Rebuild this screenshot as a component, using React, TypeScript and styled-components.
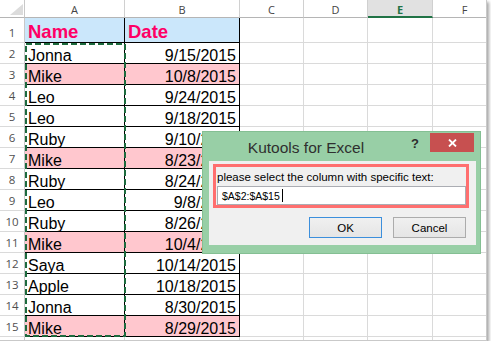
import React from 'react';
import styled, { createGlobalStyle, css } from 'styled-components';

const GlobalStyle = createGlobalStyle`
  html, body {
    margin: 0;
    padding: 0;
    background: #fff;
  }
  body {
    font-family: "Liberation Sans", Arial, sans-serif;
  }
  * {
    box-sizing: border-box;
  }
`;

const rows: Array<{ name: string; date: string; dup?: boolean }> = [
  { name: 'Jonna', date: '9/15/2015' },
  { name: 'Mike', date: '10/8/2015', dup: true },
  { name: 'Leo', date: '9/24/2015' },
  { name: 'Leo', date: '9/18/2015' },
  { name: 'Ruby', date: '9/10/2015' },
  { name: 'Mike', date: '8/23/2015', dup: true },
  { name: 'Ruby', date: '8/24/2015' },
  { name: 'Leo', date: '9/8/2015' },
  { name: 'Ruby', date: '8/26/2015' },
  { name: 'Mike', date: '10/4/2015', dup: true },
  { name: 'Saya', date: '10/14/2015' },
  { name: 'Apple', date: '10/18/2015' },
  { name: 'Jonna', date: '8/30/2015' },
  { name: 'Mike', date: '8/29/2015', dup: true },
];

const columns = ['A', 'B', 'C', 'D', 'E', 'F'];
const emptyCols = 4; // C..F

const Frame = styled.div`
  position: relative;
  width: 487px;
  height: 341px;
  overflow: hidden;
  background: #fff;
  border-right: 1px solid #c9c9c9;
  border-bottom: 1px solid #c9c9c9;
  box-shadow: 2px 2px 3px rgba(0, 0, 0, 0.35);
`;

const Sheet = styled.div`
  display: grid;
  grid-template-columns: 25px 100px 115px 64px 64px 65px 64px;
  grid-template-rows: 18px 25px repeat(15, 21px);
`;

const Corner = styled.div`
  position: relative;
  border-right: 1px solid #c8c8c8;
  border-bottom: 1px solid #b5b5b5;

  &::after {
    content: '';
    position: absolute;
    right: 1px;
    bottom: 2px;
    border-style: solid;
    border-width: 0 0 11px 13px;
    border-color: transparent transparent #dcdcdc transparent;
  }
`;

const ColHead = styled.div<{ $active?: boolean }>`
  display: flex;
  justify-content: center;
  padding-top: 2px;
  font-family: "Open Sans", "Liberation Sans", sans-serif;
  font-size: 11px;
  line-height: 15px;
  color: #444;
  border-right: 1px solid #d0d0d0;
  border-bottom: 1px solid #b5b5b5;

  ${({ $active }) =>
    $active &&
    css`
      background: #e1e1e1;
      color: #217346;
      font-weight: bold;
      border-bottom: 2px solid #217346;
    `}
`;

const RowHead = styled.div`
  display: flex;
  justify-content: center;
  align-items: flex-end;
  padding-bottom: 2px;
  font-family: "Open Sans", "Liberation Sans", sans-serif;
  font-size: 11.5px;
  line-height: 14px;
  color: #4f4f4f;
  border-right: 1px solid #c8c8c8;
  border-bottom: 1px solid #dadada;
`;

const Cell = styled.div<{ $fill?: string; $boxed?: boolean; $right?: boolean }>`
  overflow: hidden;
  white-space: nowrap;
  padding: 2px 3px 0 3px;
  font-size: 16px;
  line-height: 21px;
  color: #000;
  text-align: ${({ $right }) => ($right ? 'right' : 'left')};
  background: ${({ $fill }) => $fill || '#fff'};
  border-right: 1px solid ${({ $boxed }) => ($boxed ? '#000' : '#dadada')};
  border-bottom: 1px solid ${({ $boxed }) => ($boxed ? '#000' : '#dadada')};
`;

const TitleCell = styled(Cell)`
  padding-top: 1px;
  font-size: 18.5px;
  font-weight: bold;
  line-height: 25px;
  color: #ff0066;
`;

const MarchingAnts = styled.svg`
  position: absolute;
  left: 25px;
  top: 43px;
  pointer-events: none;
`;

/* dialog */

const Dialog = styled.div`
  position: absolute;
  left: 202px;
  top: 131px;
  width: 279px;
  height: 123px;
  display: flex;
  flex-direction: column;
  padding: 0 4px 8px 6px;
  background: #98cfa6;
  border: 1px solid #84bf93;
`;

const TitleBar = styled.div`
  height: 29px;
  display: flex;
  align-items: flex-start;
`;

const Title = styled.div`
  flex: 1;
  padding: 7px 8px 0 0;
  text-align: center;
  font-size: 15.5px;
  color: #2f2f2f;
`;

const Help = styled.div`
  margin: 4px 11px 0 0;
  font-size: 13px;
  font-weight: bold;
  color: #2d2d2d;
`;

const CloseButton = styled.div`
  width: 44px;
  height: 19px;
  margin: 1px 2px 0 0;
  display: flex;
  align-items: center;
  justify-content: center;
  background: #c75050;
`;

const Body = styled.div`
  flex: 1;
  display: flex;
  flex-direction: column;
  padding: 3px 7px 0 4px;
  background: #f0f0f0;
`;

const Highlight = styled.div`
  display: flex;
  flex-direction: column;
  padding: 0 0 0 1px;
  border: 3px solid #ff6f6f;
`;

const Label = styled.div`
  height: 19px;
  padding-top: 4px;
  font-size: 11.5px;
  color: #000;
`;

const Input = styled.div`
  height: 19px;
  display: flex;
  align-items: center;
  padding-left: 4px;
  background: #fff;
  border: 1px solid #abadb3;
  font-size: 10.5px;
  color: #000;
`;

const Caret = styled.span`
  width: 1px;
  height: 13px;
  margin-left: 2px;
  background: #000;
`;

const Actions = styled.div`
  display: flex;
  justify-content: flex-end;
  gap: 11px;
  margin-top: 9px;
  padding-right: 3px;
`;

const Button = styled.div<{ $focused?: boolean }>`
  width: 73px;
  height: 21px;
  display: flex;
  align-items: center;
  justify-content: center;
  font-size: 11.5px;
  color: #000;
  background: linear-gradient(#f0f0f0, #e5e5e5);
  border: 1px solid ${({ $focused }) => ($focused ? '#3c8fdc' : '#acacac')};
`;

const App: React.FC = () => {
  return (
    <>
      <GlobalStyle />
      <Frame>
        <Sheet>
          <Corner />
          {columns.map((col) => (
            <ColHead key={col} $active={col === 'E'}>
              {col}
            </ColHead>
          ))}

          <RowHead>1</RowHead>
          <TitleCell $fill="#cbe7fb" $boxed>
            Name
          </TitleCell>
          <TitleCell $fill="#cbe7fb" $boxed>
            Date
          </TitleCell>
          {Array.from({ length: emptyCols }).map((_, i) => (
            <Cell key={`r1-${i}`} />
          ))}

          {rows.map((row, index) => {
            const fill = row.dup ? '#ffc7ce' : undefined;
            return (
              <React.Fragment key={`row-${index}`}>
                <RowHead>{index + 2}</RowHead>
                <Cell $fill={fill} $boxed>
                  {row.name}
                </Cell>
                <Cell $fill={fill} $boxed $right>
                  {row.date}
                </Cell>
                {Array.from({ length: emptyCols }).map((_, i) => (
                  <Cell key={`r${index}-${i}`} />
                ))}
              </React.Fragment>
            );
          })}

          {/* row 16 is only a sliver at the bottom edge */}
          <RowHead />
          {Array.from({ length: 6 }).map((_, i) => (
            <Cell key={`r16-${i}`} />
          ))}
        </Sheet>

        <MarchingAnts width="101" height="294">
          <rect
            x="1"
            y="1"
            width="99"
            height="292"
            fill="none"
            stroke="#1d6b3e"
            strokeWidth="2"
            strokeDasharray="6 3"
          />
        </MarchingAnts>

        <Dialog>
          <TitleBar>
            <Title>Kutools for Excel</Title>
            <Help>?</Help>
            <CloseButton>
              <svg width="9" height="8" viewBox="0 0 9 8">
                <path d="M1 0.5 L8 7.5 M8 0.5 L1 7.5" stroke="#fff" strokeWidth="1.8" />
              </svg>
            </CloseButton>
          </TitleBar>
          <Body>
            <Highlight>
              <Label>please select the column with specific text:</Label>
              <Input>
                $A$2:$A$15
                <Caret />
              </Input>
            </Highlight>
            <Actions>
              <Button $focused>OK</Button>
              <Button>Cancel</Button>
            </Actions>
          </Body>
        </Dialog>
      </Frame>
    </>
  );
};

export default App;
